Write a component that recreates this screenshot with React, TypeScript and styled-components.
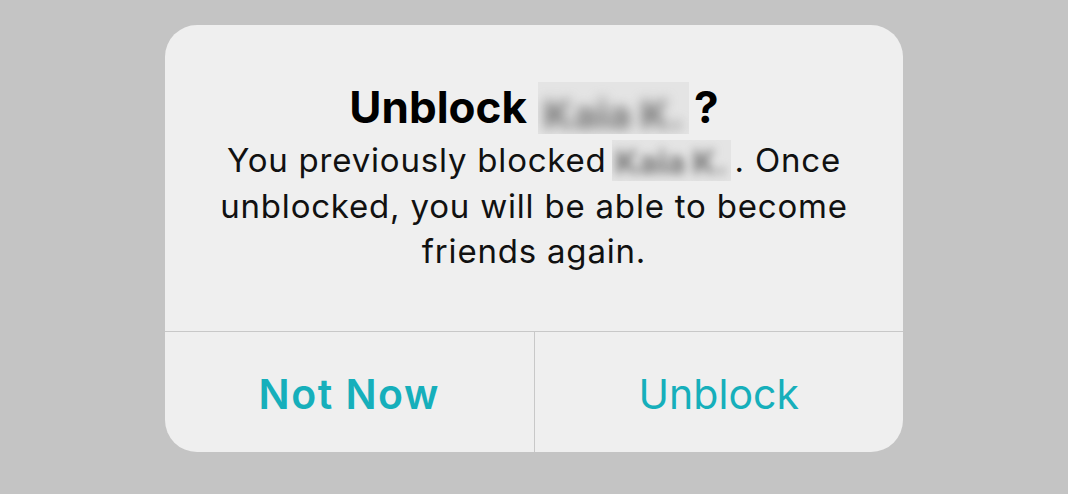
import React from "react";
import styled, { createGlobalStyle } from "styled-components";

const Global = createGlobalStyle`
  html, body { margin: 0; padding: 0; }
  body {
    background: #c4c4c4;
    font-family: Inter, "Open Sans", "Liberation Sans", sans-serif;
  }
`;

const Page = styled.div`
  width: 1068px;
  height: 494px;
  display: flex;
  justify-content: center;
  padding-top: 25px;
  box-sizing: border-box;
`;

const Dialog = styled.div`
  width: 738px;
  height: 427px;
  background: #efefef;
  border-radius: 32px;
  display: flex;
  flex-direction: column;
  overflow: hidden;
`;

const Content = styled.div`
  flex: 1;
  display: flex;
  flex-direction: column;
  align-items: center;
  padding-top: 51px;
  box-sizing: border-box;
`;

const Title = styled.h1`
  margin: 0;
  font-size: 44px;
  font-weight: 700;
  color: #000;
  line-height: 62px;
`;

const Message = styled.p`
  margin: 0;
  font-size: 33px;
  font-weight: 400;
  color: #111;
  text-align: center;
  line-height: 45px;
  letter-spacing: 0.8px;
  width: 700px;
`;

const Hidden = styled.span<{ big?: boolean }>`
  display: inline-block;
  vertical-align: middle;
  background: #e4e4e4;
  overflow: hidden;
  width: ${p => (p.big ? 151 : 119)}px;
  height: ${p => (p.big ? 52 : 41)}px;
  margin: 0 ${p => (p.big ? 5 : 4)}px 0 ${p => (p.big ? 11 : 5)}px;
  position: relative;
  top: -3px;
  text-align: center;
  letter-spacing: 0;
`;

const BlurText = styled.span<{ big?: boolean }>`
  display: inline-block;
  color: #7c7c7c;
  filter: blur(${p => (p.big ? 6 : 5)}px);
  font-size: ${p => (p.big ? 40 : 32)}px;
  line-height: ${p => (p.big ? 52 : 41)}px;
  font-weight: 800;
  white-space: nowrap;
`;

const Actions = styled.div`
  height: 120px;
  display: flex;
  border-top: 1px solid #c8c8c8;
`;

const Action = styled.button<{ bold?: boolean; divided?: boolean }>`
  flex: 1;
  border: none;
  background: transparent;
  font-family: inherit;
  font-size: 41px;
  font-weight: ${p => (p.bold ? 600 : 400)};
  letter-spacing: ${p => (p.bold ? 1.5 : 0)}px;
  color: #16afbb;
  border-left: ${p => (p.divided ? "1px solid #c8c8c8" : "none")};
  padding: 4px 0 0;
  cursor: pointer;
`;

export default function App() {
  return (
    <>
      <Global />
      <Page>
        <Dialog>
          <Content>
            <Title>
              Unblock
              <Hidden big>
                <BlurText big>Kaia K.</BlurText>
              </Hidden>
              ?
            </Title>
            <Message>
              You previously blocked
              <Hidden>
                <BlurText>Kaia K.</BlurText>
              </Hidden>
              . Once unblocked, you will be able to become friends again.
            </Message>
          </Content>
          <Actions>
            <Action bold>Not Now</Action>
            <Action divided>Unblock</Action>
          </Actions>
        </Dialog>
      </Page>
    </>
  );
}
